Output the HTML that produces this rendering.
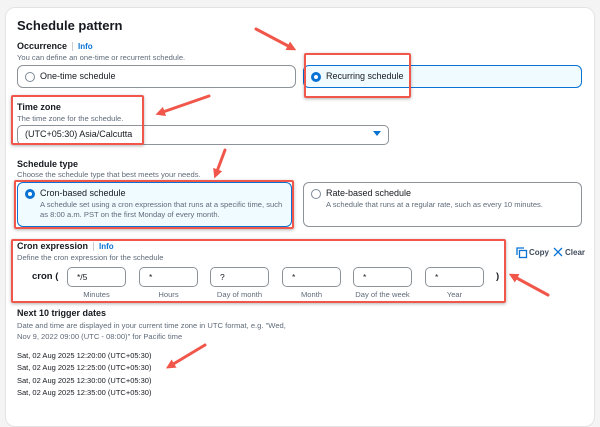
<!DOCTYPE html>
<html><head><meta charset="utf-8"><style>
*{box-sizing:border-box;margin:0;padding:0}
body{width:600px;height:401px;overflow:hidden;background:#f4f4f4;font-family:"Liberation Sans",sans-serif;color:#16191f;position:relative}
.a{position:absolute;white-space:nowrap}
.card{position:absolute;left:5px;top:7px;width:590px;height:420px;background:#fff;border:1px solid #e3e3e3;border-radius:10px}
.h{font-weight:bold;font-size:9px}
.d{font-size:7.6px;color:#5f6b7a}
.box{position:absolute;border:1px solid #8d9399;border-radius:6px;background:#fff}
.sel{background:#f0fbff;border:1.5px solid #0972d3}
.r{position:absolute;width:10px;height:10px;border-radius:50%;border:1px solid #7d8998;background:#fff}
.r.on{border:3px solid #0972d3}
.red{position:absolute;border:2.5px solid #f0574a;border-radius:2px;box-shadow:0 1px 3px rgba(0,0,0,.3)}
.in{position:absolute;top:267px;width:59px;height:20px;border:1px solid #8d9399;border-radius:5px;font-size:8.5px;padding:4px 0 0 9px}
.lb{position:absolute;top:290px;width:59px;text-align:center;font-size:7.6px;color:#5f6b7a}
.info{color:#0972d3;font-weight:bold;font-size:8px;border-left:1px solid #ccc;padding-left:5px;margin-left:5px}
.t{font-size:7.5px}
</style></head><body>
<div class="card"></div>
<div class="a" style="left:17px;top:18px;font-size:13px;font-weight:bold">Schedule pattern</div>
<div class="a h" style="left:17px;top:41px">Occurrence<span class="info">Info</span></div>
<div class="a d" style="left:17px;top:53px">You can define an one-time or recurrent schedule.</div>
<div class="box" style="left:17px;top:65px;width:279px;height:23px"></div>
<div class="r" style="left:25px;top:72px"></div>
<div class="a" style="left:40px;top:71px;font-size:9px">One-time schedule</div>
<div class="box sel" style="left:303px;top:65px;width:279px;height:23px"></div>
<div class="r on" style="left:311px;top:72px"></div>
<div class="a" style="left:326px;top:71px;font-size:9px">Recurring schedule</div>

<div class="a h" style="left:17px;top:102px">Time zone</div>
<div class="a d" style="left:17px;top:114px">The time zone for the schedule.</div>
<div class="box" style="left:17px;top:125px;width:372px;height:20px;border-radius:5px"></div>
<div class="a" style="left:25px;top:129px;font-size:9px">(UTC+05:30) Asia/Calcutta</div>
<div class="a" style="left:373px;top:131px;width:0;height:0;border-left:4px solid transparent;border-right:4px solid transparent;border-top:5px solid #0972d3"></div>

<div class="a h" style="left:17px;top:159px">Schedule type</div>
<div class="a d" style="left:17px;top:170px">Choose the schedule type that best meets your needs.</div>
<div class="box sel" style="left:17px;top:182px;width:275px;height:45px"></div>
<div class="r on" style="left:25px;top:189px"></div>
<div class="a" style="left:40px;top:188px;font-size:9px">Cron-based schedule</div>
<div class="a d" style="left:40px;top:200px;line-height:10px">A schedule set using a cron expression that runs at a specific time, such<br>as 8:00 a.m. PST on the first Monday of every month.</div>
<div class="box" style="left:303px;top:182px;width:279px;height:45px"></div>
<div class="r" style="left:311px;top:189px"></div>
<div class="a" style="left:326px;top:188px;font-size:9px">Rate-based schedule</div>
<div class="a d" style="left:326px;top:200px">A schedule that runs at a regular rate, such as every 10 minutes.</div>

<div class="a h" style="left:17px;top:241px">Cron expression<span class="info">Info</span></div>
<div class="a d" style="left:17px;top:253px">Define the cron expression for the schedule</div>
<div class="a" style="left:32px;top:271px;font-size:9.5px;font-weight:bold">cron (</div>
<div class="in" style="left:67px">*/5</div><div class="lb" style="left:67px">Minutes</div>
<div class="in" style="left:139px">*</div><div class="lb" style="left:139px">Hours</div>
<div class="in" style="left:210px">?</div><div class="lb" style="left:210px">Day of month</div>
<div class="in" style="left:282px">*</div><div class="lb" style="left:282px">Month</div>
<div class="in" style="left:353px">*</div><div class="lb" style="left:353px">Day of the week</div>
<div class="in" style="left:425px">*</div><div class="lb" style="left:425px">Year</div>
<div class="a" style="left:496px;top:271px;font-size:9.5px;font-weight:bold">)</div>
<svg class="a" style="left:516px;top:247px" width="12" height="12" viewBox="0 0 12 12"><rect x="3.5" y="3.5" width="7" height="7" fill="none" stroke="#0972d3" stroke-width="1.3"/><path d="M1 8V1h7" fill="none" stroke="#0972d3" stroke-width="1.3"/></svg>
<div class="a" style="left:529px;top:248px;font-size:8px;font-weight:bold;color:#414d5c">Copy</div>
<svg class="a" style="left:553px;top:247px" width="10" height="10" viewBox="0 0 10 10"><path d="M1 1L9 9M9 1L1 9" stroke="#0972d3" stroke-width="1.3"/></svg>
<div class="a" style="left:565px;top:248px;font-size:8px;font-weight:bold;color:#414d5c">Clear</div>

<div class="a h" style="left:17px;top:308px">Next 10 trigger dates</div>
<div class="a d" style="left:17px;top:320px;line-height:11px">Date and time are displayed in your current time zone in UTC format, e.g. "Wed,<br>Nov 9, 2022 09:00 (UTC - 08:00)" for Pacific time</div>
<div class="a t" style="left:17px;top:351px">Sat, 02 Aug 2025 12:20:00 (UTC+05:30)</div>
<div class="a t" style="left:17px;top:363px">Sat, 02 Aug 2025 12:25:00 (UTC+05:30)</div>
<div class="a t" style="left:17px;top:376px">Sat, 02 Aug 2025 12:30:00 (UTC+05:30)</div>
<div class="a t" style="left:17px;top:388px">Sat, 02 Aug 2025 12:35:00 (UTC+05:30)</div>

<div class="red" style="left:304px;top:53px;width:107px;height:45px"></div>
<div class="red" style="left:11px;top:95px;width:133px;height:50px"></div>
<div class="red" style="left:14px;top:180px;width:280px;height:49px"></div>
<div class="red" style="left:11px;top:239px;width:495px;height:64px"></div>

<svg class="a" style="left:0;top:0" width="600" height="401">
<defs><marker id="m" viewBox="0 0 10 10" refX="5" refY="5" markerWidth="3.2" markerHeight="3.2" orient="auto"><path d="M0 0L10 5L0 10z" fill="#f0574a"/></marker></defs>
<g stroke="#f0574a" stroke-width="3" stroke-linecap="round" marker-end="url(#m)">
<line x1="256" y1="29" x2="292" y2="48"/>
<line x1="209" y1="96" x2="160" y2="113"/>
<line x1="225" y1="150" x2="216" y2="174"/>
<line x1="548" y1="295" x2="513" y2="276"/>
<line x1="205" y1="345" x2="170" y2="366"/>
</g></svg>
</body></html>
